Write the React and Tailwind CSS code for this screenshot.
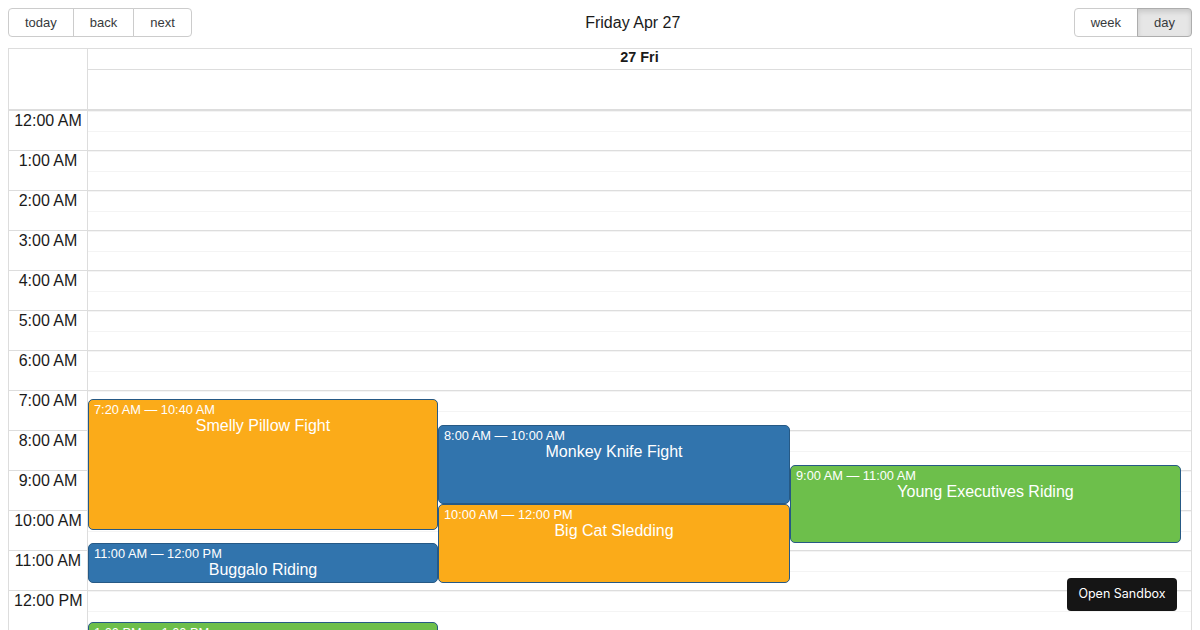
const HOUR = 39.4;

const hours = [
  "12:00 AM", "1:00 AM", "2:00 AM", "3:00 AM", "4:00 AM", "5:00 AM",
  "6:00 AM", "7:00 AM", "8:00 AM", "9:00 AM", "10:00 AM", "11:00 AM",
  "12:00 PM", "1:00 PM", "2:00 PM", "3:00 PM", "4:00 PM", "5:00 PM",
  "6:00 PM", "7:00 PM", "8:00 PM", "9:00 PM", "10:00 PM", "11:00 PM",
];

const events = [
  { title: "Smelly Pillow Fight", label: "7:20 AM — 10:40 AM", start: 7 + 1 / 3, end: 10 + 2 / 3, left: 0, width: 350, color: "bg-[#fbab19]" },
  { title: "Monkey Knife Fight", label: "8:00 AM — 10:00 AM", start: 8, end: 10, left: 350, width: 352, color: "bg-[#3174ad]" },
  { title: "Young Executives Riding", label: "9:00 AM — 11:00 AM", start: 9, end: 11, left: 702, width: 391, color: "bg-[#6dbf4b]" },
  { title: "Big Cat Sledding", label: "10:00 AM — 12:00 PM", start: 10, end: 12, left: 350, width: 352, color: "bg-[#fbab19]" },
  { title: "Buggalo Riding", label: "11:00 AM — 12:00 PM", start: 11, end: 12, left: 0, width: 350, color: "bg-[#3174ad]" },
  { title: "Bee Keeping", label: "1:00 PM — 1:00 PM", start: 13, end: 16, left: 0, width: 350, color: "bg-[#6dbf4b]" },
];

const Toolbar = () => {
  const btn = "px-4 py-[6px] border border-[#ccc] text-[13px] leading-[normal] text-[#373a3c] bg-white";
  return (
    <div className="flex items-center mb-[11px]">
      <div className="flex">
        <button className={`${btn} rounded-l-[4px]`}>today</button>
        <button className={`${btn} -ml-px`}>back</button>
        <button className={`${btn} -ml-px rounded-r-[4px]`}>next</button>
      </div>
      <div className="flex-1 text-center px-[10px] text-[16px]">Friday Apr 27</div>
      <div className="flex">
        <button className={`${btn} rounded-l-[4px]`}>week</button>
        <button className="px-4 py-[6px] -ml-px border border-[#adadad] rounded-r-[4px] text-[13px] leading-[normal] text-[#373a3c] bg-[#e6e6e6] shadow-[inset_0_3px_5px_rgba(0,0,0,0.125)]">
          day
        </button>
      </div>
    </div>
  );
};

const Event = ({ ev }) => (
  <div
    className={`absolute flex flex-col overflow-hidden rounded-[5px] border border-[#265985] px-[5px] py-[2px] text-white ${ev.color}`}
    style={{
      top: ev.start * HOUR - 1,
      height: (ev.end - ev.start) * HOUR,
      left: ev.left,
      width: ev.width,
    }}
  >
    <div className="text-[12.8px] leading-[normal] whitespace-nowrap">{ev.label}</div>
    <div className="text-center text-[16px] leading-[normal]">{ev.title}</div>
  </div>
);

export default function App() {
  return (
    <div className="h-[630px] overflow-hidden bg-white p-2 text-[#1a1a1a] font-['Liberation_Sans',Arial,sans-serif] text-[16px]">
      <Toolbar />

      <div className="flex flex-col border border-[#ddd]">
        {/* header */}
        <div className="flex">
          <div className="w-[78px] shrink-0" />
          <div className="flex-1 flex flex-col border-l border-[#ddd]">
            <div className="h-[21px] border-b border-[#ddd] text-center font-bold text-[14.4px] leading-[16px]">
              27 Fri
            </div>
            <div className="h-[39px]" />
          </div>
        </div>

        {/* time content */}
        <div className="flex border-t-2 border-[#ddd]">
          <div className="w-[78px] shrink-0">
            {hours.map((h) => (
              <div key={h} className="h-[40px] border-b border-[#ddd] px-[5px] pt-px text-center whitespace-nowrap leading-[normal]">
                {h}
              </div>
            ))}
          </div>
          <div className="relative flex-1 border-l border-[#ddd]">
            {hours.map((h) => (
              <div key={h} className="h-[40px] border-b border-[#ddd] flex flex-col">
                <div className="flex-1 border-t border-[#f4f4f4]" />
                <div className="flex-1 border-t border-[#f4f4f4]" />
              </div>
            ))}
            <div className="absolute inset-0">
              {events.map((ev) => (
                <Event key={ev.title} ev={ev} />
              ))}
            </div>
          </div>
        </div>
      </div>

      <button className="fixed bottom-[19px] right-[23px] w-[110px] h-[33px] rounded-[4px] bg-[#151515] text-white text-[12.5px] font-['Inter',sans-serif]">
        Open Sandbox
      </button>
    </div>
  );
}
